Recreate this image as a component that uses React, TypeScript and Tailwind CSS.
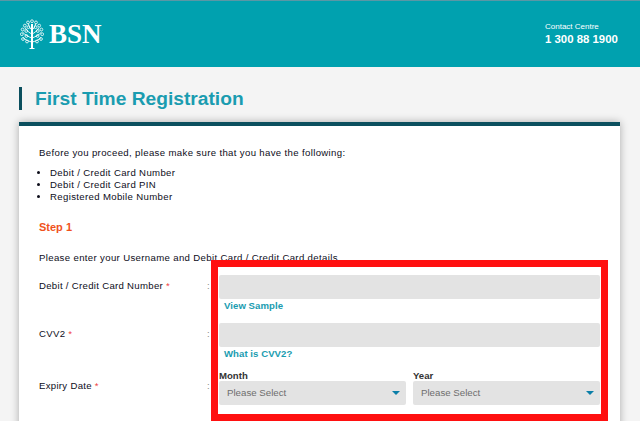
import React from "react";

const TreeLogo = () => (
  <svg width="24" height="30" viewBox="0 0 24 30" fill="none" stroke="white" strokeWidth="0.9" className="mr-[5px]">
    <path d="M12 29.5V5" strokeWidth="2" />
    <path d="M9.5 29.5h5" strokeWidth="1" />
    <path d="M12 23C9 22.5 5.5 21 3 18.5M12 23c3-.5 6.5-2 9-4.500M12 19C9 18 5 16 2.500 13M12 19c3-1 7-3 9.500-6M12 15C9.500 14 7 12 5 8.500M12 15c2.500-1 5-3 7-6.500M12 11C10.500 10 9 8 8.500 5M12 11c1.500-1 3-3 3.500-6" />
    {[
      [12, 2.2], [8, 3.4], [16, 3.4], [4.8, 6.6], [19.200, 6.600], [2.6, 10.5], [21.4, 10.5], [1.8, 15.2], [22.2, 15.2],
      [3, 20], [21, 20], [7, 22.5], [17, 22.500], [8.4, 8.2], [15.6, 8.2], [6.2, 12], [17.8, 12], [6.4, 17], [17.6, 17],
    ].map(([cx, cy]) => (
      <circle key={`${cx}-${cy}`} cx={cx} cy={cy} r="1.4" strokeWidth="0.8" />
    ))}
  </svg>
);

const Caret = () => (
  <span className="h-0 w-0 border-x-[4px] border-t-[4px] border-x-transparent border-t-[#0b7fa8]" />
);

const Select = ({ label }: { label: string }) => (
  <div className="flex-1">
    <p className="h-[12px] text-[9.6px] leading-[14px] font-bold text-[#333333]">{label}</p>
    <div className="flex h-[24px] items-center justify-between rounded-[2px] bg-[#e3e3e3] pr-[6px] pl-[8px]">
      <span className="text-[9.7px] text-[#6e6e6e]">Please Select</span>
      <Caret />
    </div>
  </div>
);

const Label = ({ text }: { text: string }) => (
  <div className="flex w-[172px] justify-between pr-[1px] text-[9.6px] leading-[14px] tracking-[0.3px] text-[#0d0d1a]">
    <span>
      {text} <span className="text-[#f04040]">*</span>
    </span>
    <span className="text-[#8a8a8a]">:</span>
  </div>
);

export default function App() {
  return (
    <div className="relative h-[421px] w-[640px] overflow-hidden bg-[#f4f4f4] font-['Liberation_Sans',Arial,sans-serif]">
      <header className="flex h-[67px] items-center justify-between border-t border-[#5b97a5] bg-[#00a1af] pr-[23px] pl-[20px]">
        <div className="flex items-center">
          <TreeLogo />
          <span className="font-['Liberation_Serif',serif] text-[27px] leading-none font-bold text-white">BSN</span>
        </div>
        <div className="w-[72px] whitespace-nowrap text-white">
          <p className="text-[8px] leading-[10px]">Contact Centre</p>
          <p className="text-[11.4px] leading-[14px] font-bold">1 300 88 1900</p>
        </div>
      </header>

      <main className="px-[19px] pt-[20px]">
        <h1 className="h-[23px] border-l-[3px] border-[#0b4f5e] pl-[13px] text-[19.2px] leading-[23px] font-bold text-[#1a9cb0]">
          First Time Registration
        </h1>

        <section className="mt-[12px] w-[601px] border-t-[4px] border-[#0b4f5e] bg-white px-[20px] pt-[21px] pb-[40px] shadow-[0_0_8px_rgba(0,0,0,0.3)]">
          <div className="text-[9.6px] leading-[12px] tracking-[0.35px] text-[#0d0d1a]">
            <p>Before you proceed, please make sure that you have the following:</p>
            <ul className="mt-[8px] list-disc pl-[11px]">
              <li>Debit / Credit Card Number</li>
              <li>Debit / Credit Card PIN</li>
              <li>Registered Mobile Number</li>
            </ul>
          </div>

          <h2 className="mt-[17px] text-[11px] leading-[14px] font-bold text-[#f0521c]">Step 1</h2>
          <p className="mt-[18px] text-[9.6px] leading-[12px] tracking-[0.35px] text-[#0d0d1a]">
            Please enter your Username and Debit Card / Credit Card details
          </p>

          <div className="mt-[11px] flex">
            <div className="pt-[4px]"><Label text="Debit / Credit Card Number" /></div>
            <div className="ml-[8px] flex-1">
              <div className="h-[24px] rounded-[2px] bg-[#e3e3e3]" />
              <p className="mt-[1px] pl-[5px] text-[9.6px] leading-[12px] font-bold tracking-[0.05px] text-[#1a9cb0]">View Sample</p>
            </div>
          </div>

          <div className="mt-[11px] flex">
            <div className="pt-[4px]"><Label text="CVV2" /></div>
            <div className="ml-[8px] flex-1">
              <div className="h-[24px] rounded-[2px] bg-[#e3e3e3]" />
              <p className="mt-[1px] pl-[5px] text-[9.6px] leading-[12px] font-bold tracking-[0.05px] text-[#1a9cb0]">What is CVV2?</p>
            </div>
          </div>

          <div className="mt-[9px] flex">
            <div className="pt-[10px]"><Label text="Expiry Date" /></div>
            <div className="ml-[8px] flex flex-1 gap-[7px]">
              <Select label="Month" />
              <Select label="Year" />
            </div>
          </div>
        </section>
      </main>

      <div className="absolute top-[260px] left-[211px] h-[161px] w-[397px] border-[7px] border-[#ff1010]" />
    </div>
  );
}
